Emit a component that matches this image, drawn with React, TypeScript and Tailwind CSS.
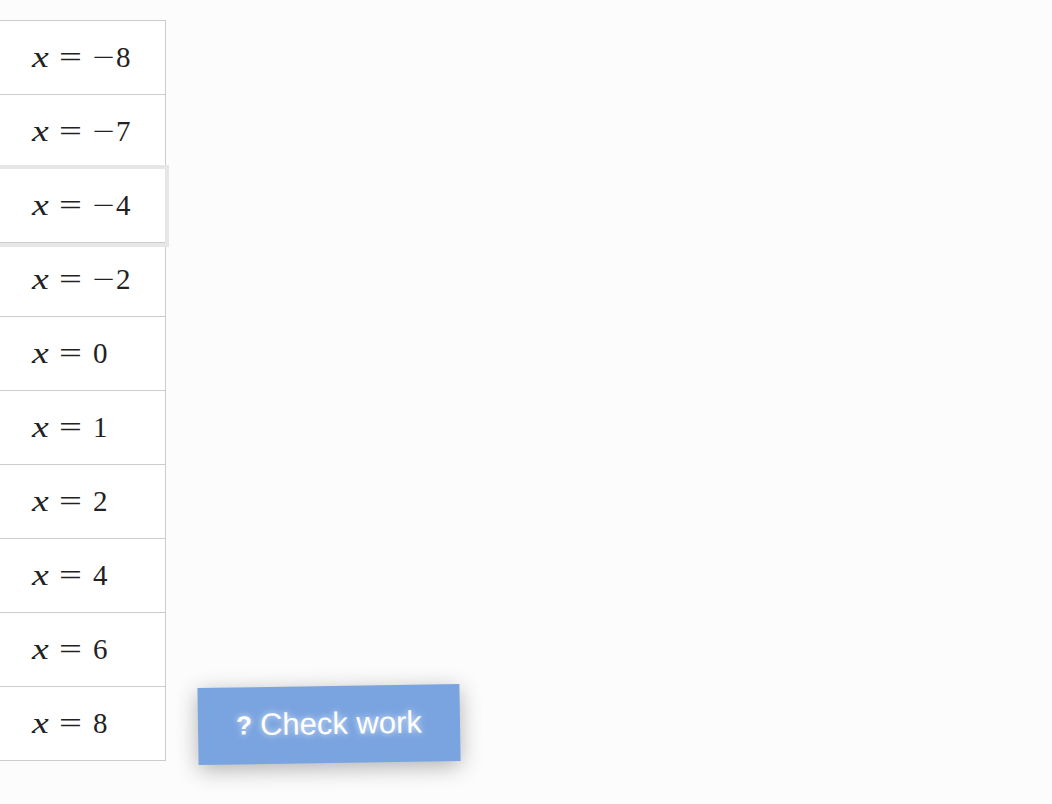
import React from "react";

const values = ["−8", "−7", "−4", "−2", "0", "1", "2", "4", "6", "8"];

function Eq({ v }: { v: string }) {
  const neg = v.startsWith("−");
  const digit = neg ? v.slice(1) : v;
  return (
    <span className="flex items-baseline text-[29px] leading-none text-[#222]" style={{ fontFamily: '"Liberation Serif", "DejaVu Serif", serif' }}>
      <i className="inline-block w-[17px] origin-left scale-x-[1.3]">x</i>
      <span className="ml-[10px] inline-block w-[23px] scale-x-[1.4] text-center">=</span>
      {neg && <span className="ml-[11px] inline-block w-[21px] scale-x-[1.35] text-center">−</span>}
      <span className={neg ? "ml-[2px]" : "ml-[11px]"}>{digit}</span>
    </span>
  );
}

export default function App() {
  return (
    <div className="min-h-[804px] w-full bg-[#fcfcfc]">
      <div className="flex items-end pt-[20px]">
        <div className="w-[166px] border-t border-r border-[#cccccc] bg-white">
          {values.map((v, i) => (
            <div
              key={v}
              className={
                i === 2
                  ? "relative z-10 flex h-[74px] items-center border-b border-[#cccccc] bg-white pl-[32px] shadow-[0_0_0_4px_#e6e6e6]"
                  : "flex h-[74px] items-center border-b border-[#cccccc] bg-white pl-[32px]"
              }
            >
              <Eq v={v} />
            </div>
          ))}
        </div>
        <button
          className="mb-[-2px] ml-[32px] flex h-[77px] w-[262px] -rotate-[0.9deg] items-center justify-center gap-[8px] bg-[#7aa4e0] text-white shadow-[0_5px_22px_rgba(0,0,0,0.3)]"
          style={{ fontFamily: '"Liberation Sans", Arial, sans-serif', textShadow: "0 0 6px rgba(255,255,255,0.8)" }}
        >
          <span className="text-[26px] font-bold">?</span>
          <span className="text-[31px]">Check work</span>
        </button>
      </div>
    </div>
  );
}
